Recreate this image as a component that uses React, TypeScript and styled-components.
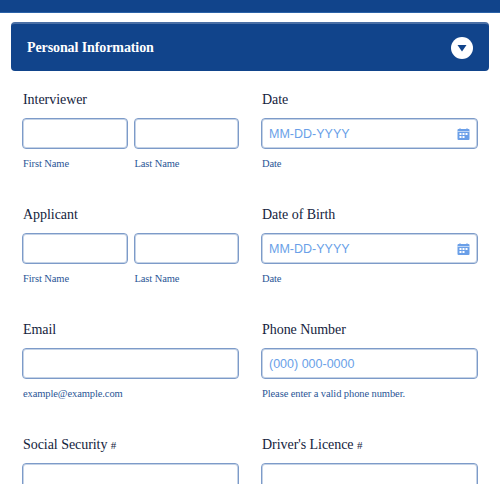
import type { ReactNode } from 'react'
import { createGlobalStyle, styled } from 'styled-components'

const GlobalStyle = createGlobalStyle`
  html, body {
    margin: 0;
    padding: 0;
    height: 484px;
    overflow: hidden;
    background: #fff;
  }
`

const Page = styled.div`
  width: 500px;
  height: 484px;
  overflow: hidden;
  background: #fff;
  font-family: 'Liberation Serif', serif;
`

const TopBar = styled.div`
  height: 12px;
  background: #11448b;
  border-bottom: 1px solid #2a62a8;
`

const Header = styled.div`
  margin: 9px 11px 0;
  height: 49px;
  box-sizing: border-box;
  padding: 0 16px;
  display: flex;
  align-items: center;
  justify-content: space-between;
  background: #11448b;
  border-top: 2px solid #4a6fa5;
  border-radius: 4px;
`

const Title = styled.h2`
  margin: 0;
  color: #fff;
  font-size: 14px;
  font-weight: 700;
  letter-spacing: -0.1px;
`

const Toggle = styled.svg`
  width: 22px;
  height: 22px;
  display: block;
`

const Grid = styled.div`
  display: grid;
  grid-template-columns: 217px 217px;
  column-gap: 22px;
  row-gap: 29px;
  padding: 21px 22px 0;
`

const Field = styled.div`
  display: flex;
  flex-direction: column;
  min-height: 86px;
`

const Label = styled.div`
  color: #14233d;
  font-size: 14px;
  line-height: 16px;
  letter-spacing: -0.05px;
  margin: 0 0 10px 1px;
`

const Small = styled.span`
  font-size: 11px;
`

const Inputs = styled.div`
  display: flex;
  gap: 6px;
`

const Part = styled.div`
  flex: 1;
  display: flex;
  flex-direction: column;
  min-width: 0;
`

const Box = styled.div`
  height: 31px;
  box-sizing: border-box;
  padding: 0 7px;
  display: flex;
  align-items: center;
  justify-content: space-between;
  border: 1px solid #7d9bc9;
  border-radius: 4px;
  box-shadow: inset 0 0 0 1px #c5d3e6;
  background: #fff;
`

const Placeholder = styled.span`
  color: #6a9fe8;
  font-family: 'Liberation Sans', sans-serif;
  font-size: 12.5px;
`

const Hint = styled.div`
  margin: 8px 0 0 1px;
  color: #2a5596;
  font-size: 10.5px;
  line-height: 14px;
  letter-spacing: -0.1px;
`

const CalendarIcon = () => (
  <svg width='13' height='12' viewBox='0 0 13 12' aria-hidden='true'>
    <rect x='2.5' y='0' width='1' height='2' fill='#8fb4ec' />
    <rect x='9.5' y='0' width='1' height='2' fill='#8fb4ec' />
    <rect x='0.5' y='1' width='12' height='11' rx='1' fill='#6a9fe8' />
    <rect x='0.5' y='3' width='12' height='0.8' fill='#fff' opacity='0.7' />
    {[2.5, 5.5, 8.5].map((x) => (
      <rect key={x} x={x} y='5' width='2' height='2' fill='#fff' />
    ))}
    {[2.5, 5.5].map((x) => (
      <rect key={x} x={x} y='8' width='2' height='2' fill='#fff' />
    ))}
  </svg>
)

const NameField = ({ label }: { label: string }) => (
  <Field>
    <Label>{label}</Label>
    <Inputs>
      <Part>
        <Box />
        <Hint>First Name</Hint>
      </Part>
      <Part>
        <Box />
        <Hint>Last Name</Hint>
      </Part>
    </Inputs>
  </Field>
)

const DateField = ({ label }: { label: string }) => (
  <Field>
    <Label>{label}</Label>
    <Box>
      <Placeholder>MM-DD-YYYY</Placeholder>
      <CalendarIcon />
    </Box>
    <Hint>Date</Hint>
  </Field>
)

const TextField = ({ label, placeholder, hint }: { label: ReactNode; placeholder?: string; hint?: string }) => (
  <Field>
    <Label>{label}</Label>
    <Box>{placeholder && <Placeholder>{placeholder}</Placeholder>}</Box>
    {hint && <Hint>{hint}</Hint>}
  </Field>
)

export default function App() {
  return (
    <Page>
      <GlobalStyle />
      <TopBar />
      <Header>
        <Title>Personal Information</Title>
        <Toggle viewBox='0 0 22 22' aria-hidden='true'>
          <circle cx='11' cy='11' r='11' fill='#fff' />
          <path d='M6.5 8h9L11 14.5z' fill='#11448b' />
        </Toggle>
      </Header>
      <Grid>
        <NameField label='Interviewer' />
        <DateField label='Date' />
        <NameField label='Applicant' />
        <DateField label='Date of Birth' />
        <TextField label='Email' hint='example@example.com' />
        <TextField label='Phone Number' placeholder='(000) 000-0000' hint='Please enter a valid phone number.' />
        <TextField label={<>Social Security <Small>#</Small></>} />
        <TextField label={<>Driver's Licence <Small>#</Small></>} />
      </Grid>
    </Page>
  )
}
